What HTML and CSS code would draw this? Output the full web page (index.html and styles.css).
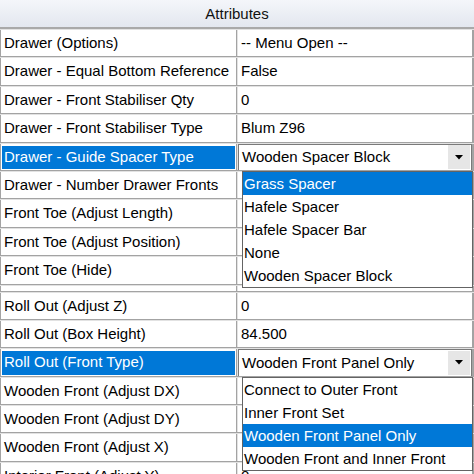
FILE: index.html
```html
<!DOCTYPE html>
<html>
<head>
<meta charset="utf-8">
<link rel="stylesheet" href="styles.css">
</head>
<body>
<div class="grid">
  <div class="header">Attributes</div>
  <div class="row"><div class="cell name">Drawer (Options)</div><div class="cell value">-- Menu Open --</div></div>
  <div class="row"><div class="cell name">Drawer - Equal Bottom Reference</div><div class="cell value">False</div></div>
  <div class="row"><div class="cell name">Drawer - Front Stabiliser Qty</div><div class="cell value">0</div></div>
  <div class="row"><div class="cell name">Drawer - Front Stabiliser Type</div><div class="cell value">Blum Z96</div></div>
  <div class="row">
    <div class="cell name selected">Drawer - Guide Spacer Type</div>
    <div class="cell value combo-cell">
      <div class="combo"><span class="combo-text">Wooden Spacer Block</span><span class="combo-btn"><svg width="8" height="5" viewBox="0 0 8 5"><path d="M0 0H8L4 4.5Z" fill="#000"/></svg></span></div>
      <div class="list">
        <div class="item active">Grass Spacer</div>
        <div class="item">Hafele Spacer</div>
        <div class="item">Hafele Spacer Bar</div>
        <div class="item">None</div>
        <div class="item">Wooden Spacer Block</div>
      </div>
    </div>
  </div>
  <div class="row"><div class="cell name">Drawer - Number Drawer Fronts</div><div class="cell value"></div></div>
  <div class="row"><div class="cell name">Front Toe (Adjust Length)</div><div class="cell value"></div></div>
  <div class="row"><div class="cell name">Front Toe (Adjust Position)</div><div class="cell value"></div></div>
  <div class="row"><div class="cell name">Front Toe (Hide)</div><div class="cell value"></div></div>
  <div class="row thin"><div class="cell name"></div><div class="cell value"></div></div>
  <div class="row"><div class="cell name">Roll Out (Adjust Z)</div><div class="cell value">0</div></div>
  <div class="row"><div class="cell name">Roll Out (Box Height)</div><div class="cell value">84.500</div></div>
  <div class="row">
    <div class="cell name selected">Roll Out (Front Type)</div>
    <div class="cell value combo-cell">
      <div class="combo"><span class="combo-text">Wooden Front Panel Only</span><span class="combo-btn"><svg width="8" height="5" viewBox="0 0 8 5"><path d="M0 0H8L4 4.5Z" fill="#000"/></svg></span></div>
      <div class="list">
        <div class="item">Connect to Outer Front</div>
        <div class="item">Inner Front Set</div>
        <div class="item active">Wooden Front Panel Only</div>
        <div class="item">Wooden Front and Inner Front</div>
      </div>
    </div>
  </div>
  <div class="row"><div class="cell name">Wooden Front (Adjust DX)</div><div class="cell value"></div></div>
  <div class="row"><div class="cell name">Wooden Front (Adjust DY)</div><div class="cell value"></div></div>
  <div class="row"><div class="cell name">Wooden Front (Adjust X)</div><div class="cell value"></div></div>
  <div class="row"><div class="cell name">Interior Front (Adjust Y)</div><div class="cell value">0</div></div>
</div>
</body>
</html>
```
FILE: styles.css
```css
html, body {
  margin: 0;
  padding: 0;
  background: #ffffff;
  overflow: hidden;
}
.grid {
  width: 474px;
  height: 474px;
  overflow: hidden;
  font-family: "Liberation Sans", Arial, sans-serif;
  font-size: 15px;
  color: #000;
}
.header {
  height: 29px;
  box-sizing: border-box;
  background: linear-gradient(#f4f6fa, #e3e7ef);
  border-bottom: 2px solid #a9a9a9;
  text-align: center;
  line-height: 28px;
  color: #111;
}
.row {
  display: flex;
  height: 28.4px;
  box-sizing: border-box;
  border-bottom: 1px solid #a3a3a3;
  border-top: 1px solid #e2e2e2;
}
.row.thin {
  height: 7px;
}
.cell {
  box-sizing: border-box;
  line-height: 26px;
  white-space: nowrap;
  padding-left: 3px;
  background: #fff;
}
.name {
  width: 237px;
  border-left: 1px solid #a3a3a3;
  border-right: 1px solid #a3a3a3;
}
.value {
  flex: 1;
  border-right: 2px solid #a3a3a3;
  border-left: 1px solid #e2e2e2;
}
.selected {
  background: #0078d7;
  color: #fff;
  box-shadow: inset 0 0 0 1px #fff, inset 0 2px 0 #fff, inset 0 -1px 0 #fff;
}
.combo-cell {
  position: relative;
  padding-left: 0;
}
.combo {
  display: flex;
  height: 100%;
  box-sizing: border-box;
  border: 1px solid #7a7a7a;
  border-bottom: none;
  align-items: center;
}
.combo-text {
  flex: 1;
  padding-left: 3px;
}
.combo-btn {
  width: 22px;
  height: 24px;
  margin-right: 1px;
  background: #e6e6e6;
  display: flex;
  align-items: center;
  justify-content: center;
}
.list {
  position: absolute;
  top: 100%;
  left: 4px;
  right: -1px;
  margin-top: 1px;
  background: #fff;
  border: 1px solid #646464;
  z-index: 2;
}
.item {
  height: 23px;
  line-height: 23px;
  padding-left: 1px;
  white-space: nowrap;
}
.item.active {
  background: #0078d7;
  color: #fff;
}
```
